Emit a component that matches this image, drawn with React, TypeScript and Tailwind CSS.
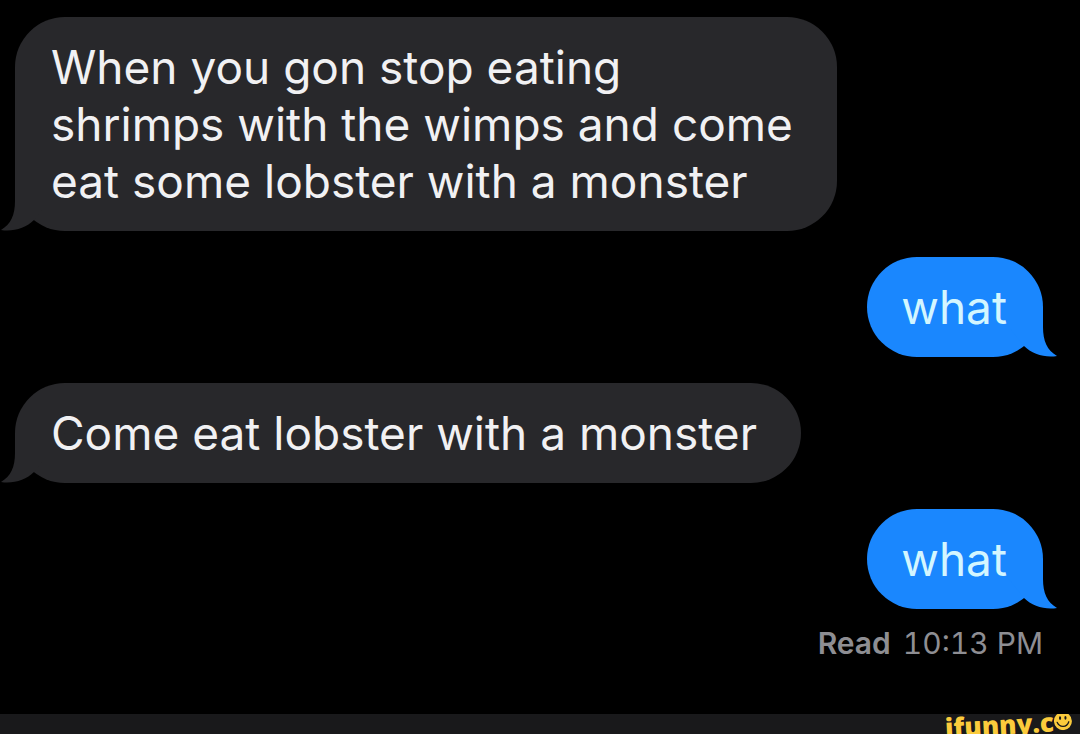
import clsx from 'clsx'

interface Message {
  id: number
  text: string
  mine: boolean
}

const messages: Message[] = [
  { id: 1, text: 'When you gon stop eating shrimps with the wimps and come eat some lobster with a monster', mine: false },
  { id: 2, text: 'what', mine: true },
  { id: 3, text: 'Come eat lobster with a monster', mine: false },
  { id: 4, text: 'what', mine: true },
]

function Tail({ mine }: { mine: boolean }) {
  return (
    <svg
      viewBox="0 0 64 50"
      aria-hidden="true"
      className={clsx(
        'absolute bottom-0 h-[50px] w-16',
        mine ? '-right-3.5 -scale-x-100 fill-[#1a87fe]' : '-left-3.5 fill-[#28282b]',
      )}
    >
      <path d="M14 0V20C14 34 10 43 0 49C12 51 25 47 33 39L64 0Z" />
    </svg>
  )
}

function Bubble({ text, mine }: Message) {
  return (
    <li
      className={clsx(
        'relative max-w-4/5 rounded-[50px] pt-[22px] pb-[21px] text-[46px] leading-[57px]',
        mine ? 'self-end bg-[#1a87fe] pr-9 pl-[34px] text-[#d3f6ff]' : 'self-start bg-[#28282b] pr-11 pl-9 text-[#f1f1f3]',
      )}
    >
      <Tail mine={mine} />
      <p className="relative">{text}</p>
    </li>
  )
}

function Smiley() {
  return (
    <svg viewBox="0 0 20 20" aria-hidden="true" className="size-[18px]">
      <circle cx="10" cy="10" r="10" fill="#fbcb3c" />
      <ellipse cx="7" cy="6.5" rx="1.2" ry="2" fill="#19191b" />
      <ellipse cx="13" cy="6.5" rx="1.2" ry="2" fill="#19191b" />
      <path d="M3.5 11C6 17.5 14 17.5 16.5 11" fill="none" stroke="#19191b" strokeWidth="1.4" strokeLinecap="round" />
    </svg>
  )
}

export default function App() {
  return (
    <div className="flex min-h-screen flex-col overflow-hidden bg-black font-['Inter',sans-serif]">
      <main className="flex flex-1 flex-col pt-[17px] pr-[37px] pl-[15px]">
        <ul className="flex flex-col gap-[26px]">
          {messages.map((message) => (
            <Bubble key={message.id} {...message} />
          ))}
        </ul>
        <p className="mt-4 flex gap-3 self-end text-[30px] leading-9 text-[#8e8e93]">
          <span className="font-semibold">Read</span>
          <time className="tabular-nums">10:13 PM</time>
        </p>
      </main>
      <footer className="flex h-5 items-start justify-end overflow-hidden bg-[#19191b] pr-2">
        <div className="flex -rotate-3 items-center font-['Open_Sans',sans-serif] text-[26px] leading-5 font-extrabold text-[#fbcb3c]">
          <span>ifunny.c</span>
          <Smiley />
        </div>
      </footer>
    </div>
  )
}
